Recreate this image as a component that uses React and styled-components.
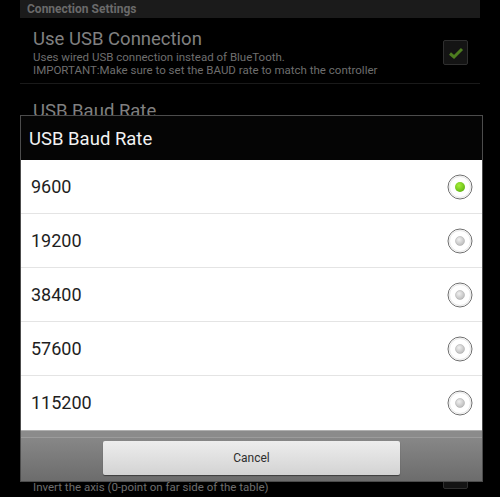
import React from "react";
import styled, { createGlobalStyle } from "styled-components";

const Global = createGlobalStyle`
  html, body { margin: 0; padding: 0; background: #000; }
  body { font-family: Roboto, "Noto Sans", "Liberation Sans", sans-serif; }
`;

const Screen = styled.div`
  position: relative;
  width: 500px;
  height: 497px;
  overflow: hidden;
  background: #000;
`;

const Settings = styled.div`
  margin: 0 20px;
  display: flex;
  flex-direction: column;
`;

const Category = styled.div`
  height: 18px;
  line-height: 18px;
  background: #1b1b1b;
  color: #6a6a6a;
  font-size: 12px;
  font-weight: 700;
  padding-left: 7px;
`;

const Item = styled.div`
  display: flex;
  align-items: center;
  padding: ${(p) => (p.$top ? p.$top : 10)}px 12px 5px 13px;
  border-bottom: 1px solid #1a1a1a;
`;

const ItemText = styled.div`
  flex: 1;
  min-width: 0;
`;

const ItemTitle = styled.div`
  font-size: 18.5px;
  line-height: 22px;
  color: #808080;
  margin-bottom: 1px;
  white-space: nowrap;
`;

const ItemSummary = styled.div`
  font-size: 11.5px;
  line-height: 13.33px;
  color: #6e6e6e;
  white-space: nowrap;
`;

const CheckBox = styled.div`
  width: 23px;
  height: 23px;
  border: 1px solid #2f2f2f;
  border-radius: 2px;
  background: #141414;
  display: flex;
  align-items: center;
  justify-content: center;
  flex-shrink: 0;
`;

const Dialog = styled.div`
  position: absolute;
  left: 20px;
  top: 115px;
  width: 461px;
  border: 1px solid #4c4c4c;
  background: #050505;
  display: flex;
  flex-direction: column;
`;

const DialogTitle = styled.div`
  height: 44px;
  display: flex;
  align-items: center;
  padding: 2px 0 0 8px;
  box-sizing: border-box;
  color: #f2f2f2;
  font-size: 18.5px;
`;

const List = styled.div`
  background: #fff;
  display: flex;
  flex-direction: column;
`;

const Row = styled.div`
  height: 53px;
  display: flex;
  align-items: center;
  justify-content: space-between;
  padding: 0 9px 0 10px;
  font-size: 18px;
  color: #1e1e1e;
  border-bottom: 1px solid ${(p) => (p.$last ? "transparent" : "#e4e4e4")};
`;

const Footer = styled.div`
  border-top: 1px solid #b0b0b0;
  display: flex;
  flex-direction: column;
`;

const FooterBand = styled.div`
  height: 6px;
  background: #8b8b8b;
  border-bottom: 1px solid #9c9c9c;
`;

const ButtonBar = styled.div`
  display: flex;
  justify-content: center;
  padding: 3px 0 6px;
  background: linear-gradient(#878787, #6c6c6c);
`;

const Button = styled.button`
  width: 297px;
  height: 34px;
  border: none;
  border-radius: 2px;
  background: linear-gradient(#ededed, #d3d3d3);
  box-shadow: 0 1px 1px rgba(0, 0, 0, 0.45);
  color: #2e2e2e;
  font-family: Roboto, "Noto Sans", sans-serif;
  font-size: 12px;
  padding: 0;
`;

const Check = () => (
  <svg width="16" height="14" viewBox="0 0 16 14">
    <path d="M2 7.5 L6 11 L14 3" fill="none" stroke="#4d7d1f" strokeWidth="3" />
  </svg>
);

const Radio = ({ checked }) => (
  <svg width="26" height="26" viewBox="0 0 26 26">
    <defs>
      <radialGradient id="g1" cx="0.4" cy="0.35" r="0.7">
        <stop offset="0" stopColor="#a6ef3a" />
        <stop offset="1" stopColor="#5fb50f" />
      </radialGradient>
      <radialGradient id="g2" cx="0.4" cy="0.35" r="0.7">
        <stop offset="0" stopColor="#f0f0f0" />
        <stop offset="1" stopColor="#b9b9b9" />
      </radialGradient>
    </defs>
    <circle cx="13" cy="13" r="12" fill="#fff" stroke="#6f6f6f" strokeWidth="1" />
    <circle cx="13" cy="13" r="10.5" fill="none" stroke="#e6e6e6" strokeWidth="1" />
    {checked ? (
      <circle cx="13" cy="13" r="5" fill="url(#g1)" />
    ) : (
      <circle cx="13" cy="13" r="4.5" fill="url(#g2)" stroke="#a8a8a8" strokeWidth="0.5" />
    )}
  </svg>
);

const rates = ["9600", "19200", "38400", "57600", "115200"];

export default function App() {
  return (
    <Screen>
      <Global />
      <Settings>
        <Category>Connection Settings</Category>
        <Item>
          <ItemText>
            <ItemTitle>Use USB Connection</ItemTitle>
            <ItemSummary>Uses wired USB connection instead of BlueTooth.</ItemSummary>
            <ItemSummary>IMPORTANT:Make sure to set the BAUD rate to match the controller</ItemSummary>
          </ItemText>
          <CheckBox>
            <Check />
          </CheckBox>
        </Item>
        <Item $top={16}>
          <ItemText>
            <ItemTitle>USB Baud Rate</ItemTitle>
            <ItemSummary>9600</ItemSummary>
          </ItemText>
        </Item>
        <Category>X-Axis</Category>
        <Item>
          <ItemText>
            <ItemTitle>Steps per mm</ItemTitle>
            <ItemSummary>Number of motor steps per millimeter</ItemSummary>
          </ItemText>
        </Item>
        <Item>
          <ItemText>
            <ItemTitle>Table Length</ItemTitle>
            <ItemSummary>Length of the axis in mm</ItemSummary>
          </ItemText>
        </Item>
        <Item>
          <ItemText>
            <ItemTitle>Max Speed</ItemTitle>
            <ItemSummary>Maximum speed of the axis</ItemSummary>
          </ItemText>
        </Item>
        <Item>
          <ItemText>
            <ItemTitle>Acceleration</ItemTitle>
            <ItemSummary>Acceleration of the axis.</ItemSummary>
            <ItemSummary>Lower values give smoother movement</ItemSummary>
          </ItemText>
        </Item>
        <Item>
          <ItemText>
            <ItemTitle>Home Position</ItemTitle>
            <ItemSummary>Position used when homing the axis.</ItemSummary>
            <ItemSummary>Measured from the 0-point</ItemSummary>
          </ItemText>
        </Item>
        <Item>
          <ItemText>
            <ItemTitle>Invert X-Axis</ItemTitle>
            <ItemSummary>Invert the axis (0-point on far side of the table)</ItemSummary>
          </ItemText>
          <CheckBox />
        </Item>
      </Settings>

      <Dialog>
        <DialogTitle>USB Baud Rate</DialogTitle>
        <List>
          {rates.map((r, i) => (
            <Row key={r} $last={i === rates.length - 1}>
              <span>{r}</span>
              <Radio checked={i === 0} />
            </Row>
          ))}
        </List>
        <Footer>
          <FooterBand />
          <ButtonBar>
            <Button>Cancel</Button>
          </ButtonBar>
        </Footer>
      </Dialog>
    </Screen>
  );
}
